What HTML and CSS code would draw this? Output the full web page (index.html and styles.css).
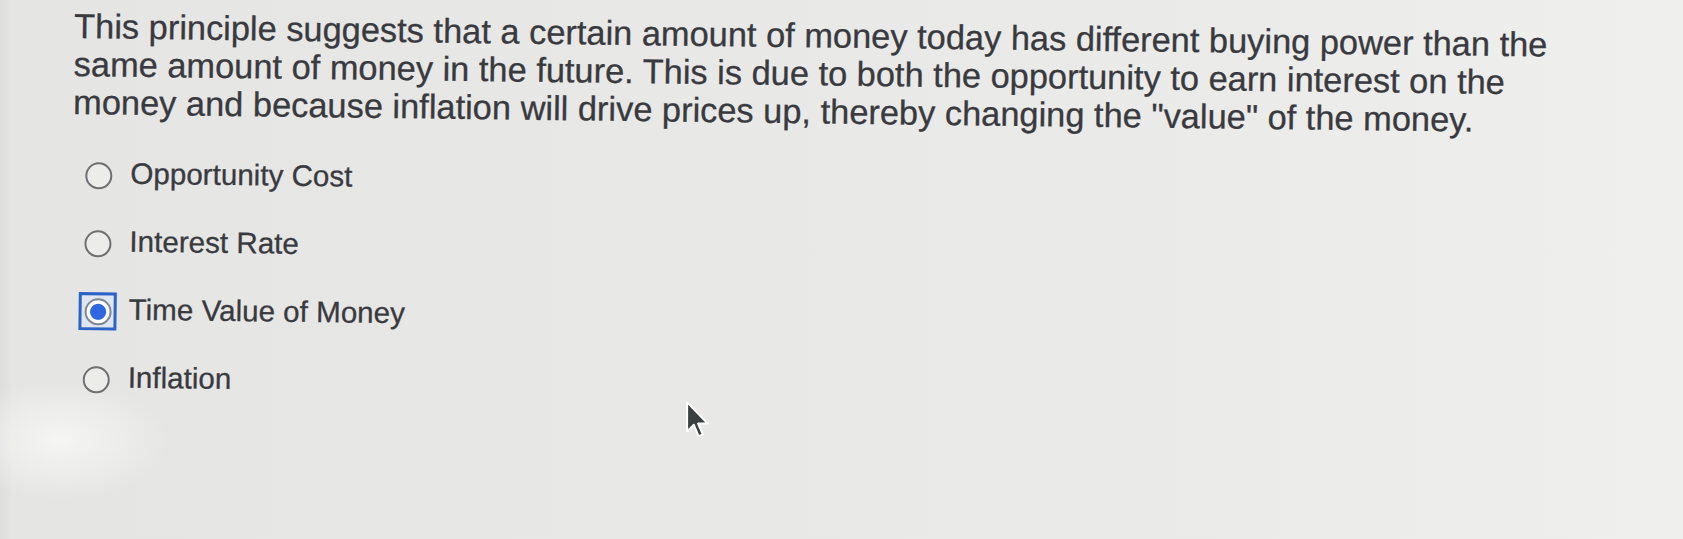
FILE: index.html
```html
<!DOCTYPE html>
<html>
<head>
<meta charset="utf-8">
<link rel="stylesheet" href="styles.css">
</head>
<body>
<main class="question">
  <p class="prompt">This principle suggests that a certain amount of money today has different buying power than the same amount of money in the future. This is due to both the opportunity to earn interest on the money and because inflation will drive prices up, thereby changing the "value" of the money.</p>
  <ul class="options">
    <li class="option"><span class="radio"></span><span class="label">Opportunity Cost</span></li>
    <li class="option"><span class="radio"></span><span class="label">Interest Rate</span></li>
    <li class="option selected"><span class="focus"><span class="radio checked"></span></span><span class="label">Time Value of Money</span></li>
    <li class="option"><span class="radio"></span><span class="label">Inflation</span></li>
  </ul>
</main>
<svg class="cursor" width="28" height="41" viewBox="0 0 22 34">
  <path d="M2 2 L2 26 L7.5 20.5 L11.5 30 L15 28.5 L11 19.5 L19 19.5 Z" fill="#3a3f40" stroke="#ffffff" stroke-width="1.6" stroke-linejoin="round"/>
</svg>
</body>
</html>
```
FILE: styles.css
```css
html, body {
  margin: 0;
  padding: 0;
  width: 1683px;
  height: 539px;
  overflow: hidden;
}
body {
  position: relative;
  font-family: "Liberation Sans", Arial, sans-serif;
  color: #393a40;
  -webkit-text-stroke: 0.3px #393a40;
  background:
    radial-gradient(ellipse 110px 60px at 60px 440px, rgba(250,251,250,0.75), rgba(250,251,250,0) 100%),
    linear-gradient(90deg, #dedede 0px, #e5e5e3 12px, #e8e8e6 40%, #ebebe9 75%, #efefed 100%);
}
.question {
  padding: 7px 0 0 72px;
  transform: rotate(0.72deg);
  transform-origin: 72px 200px;
}
.prompt {
  margin: 0;
  width: 1520px;
  font-size: 34.4px;
  line-height: 38px;
}
.options {
  list-style: none;
  margin: 20px 0 0 0;
  padding: 0;
}
.option {
  display: flex;
  align-items: center;
  height: 68px;
  font-size: 29.6px;
}
.radio {
  box-sizing: border-box;
  width: 27px;
  height: 27px;
  margin-left: 13px;
  border: 2px solid #6e6f72;
  border-radius: 50%;
  background: #ececea;
  flex: none;
}
.label {
  margin-left: 18px;
  padding-bottom: 5px;
}
.focus {
  box-sizing: border-box;
  width: 38px;
  height: 38px;
  margin-left: 8px;
  margin-right: -6px;
  border: 3px solid #2c63c6;
  background: #dfe6ef;
  display: flex;
  align-items: center;
  justify-content: center;
  flex: none;
}
.focus .radio {
  margin-left: 0;
  border: 2px solid #7d8797;
  background: radial-gradient(circle, #2f67e0 0 7.5px, #ffffff 8.5px);
}
.cursor {
  position: absolute;
  left: 684px;
  top: 400px;
}
```
